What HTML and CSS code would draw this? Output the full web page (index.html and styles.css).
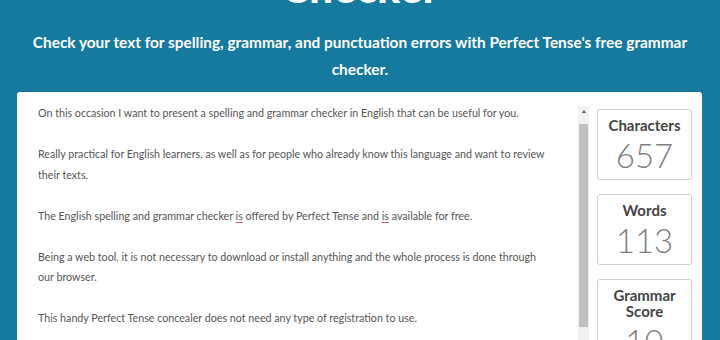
FILE: index.html
```html
<!DOCTYPE html>
<html>
<head>
<meta charset="utf-8">
<link rel="stylesheet" href="styles.css">
</head>
<body>
<header class="hero">
  <h1 class="title">Checker</h1>
  <p class="subtitle">Check your text for spelling, grammar, and punctuation errors with Perfect Tense's free grammar checker.</p>
</header>
<main class="card">
  <div class="editor">
    <div class="text">
      <p>On this occasion I want to present a spelling and grammar checker in English that can be useful for you.</p>
      <p>Really practical for English learners, as well as for people who already know this language and want to review their texts.</p>
      <p>The English spelling and grammar checker <span class="err">is</span> offered by Perfect Tense and <span class="err">is</span> available for free.</p>
      <p>Being a web tool, it is not necessary to download or install anything and the whole process is done through our browser.</p>
      <p>This handy Perfect Tense concealer does not need any type of registration to use.</p>
    </div>
    <div class="scrollbar">
      <div class="arrow"></div>
      <div class="thumb"></div>
    </div>
  </div>
  <aside class="stats">
    <div class="stat">
      <div class="stat-label">Characters</div>
      <div class="stat-value">657</div>
    </div>
    <div class="stat">
      <div class="stat-label">Words</div>
      <div class="stat-value">113</div>
    </div>
    <div class="stat">
      <div class="stat-label">Grammar<br>Score</div>
      <div class="stat-value">10</div>
    </div>
  </aside>
</main>
</body>
</html>
```
FILE: styles.css
```css
html, body {
  margin: 0;
  padding: 0;
}
body {
  background: #16799e;
  width: 720px;
  height: 340px;
  overflow: hidden;
  font-family: Lato, "Open Sans", sans-serif;
}
.hero {
  text-align: center;
  color: #fff;
}
.title {
  margin: -34px 0 0;
  font-size: 42px;
  line-height: 42px;
  font-weight: 900;
  letter-spacing: 0.5px;
}
.subtitle {
  margin: 21px 16px 0;
  font-size: 15.4px;
  line-height: 27px;
  font-weight: 700;
}
.card {
  margin: 9px 18px 0 17px;
  background: #fff;
  border-radius: 3px 3px 0 0;
  display: flex;
  padding: 11px 10px 0 21px;
  height: 300px;
}
.editor {
  flex: 1;
  display: flex;
}
.text {
  flex: 1;
  padding-right: 28px;
  font-size: 10.7px;
  line-height: 20.5px;
  color: #555;
}
.text p {
  margin: 0 0 20.5px;
}
.err {
  text-decoration: underline;
  text-decoration-color: #e2587a;
  text-underline-offset: 2px;
}
.scrollbar {
  width: 11px;
  margin-top: 3px;
  background: #f1f1f1;
  display: flex;
  flex-direction: column;
  align-items: center;
}
.arrow {
  width: 0;
  height: 0;
  margin-top: 4px;
  border-left: 2.5px solid transparent;
  border-right: 2.5px solid transparent;
  border-bottom: 3px solid #555;
}
.thumb {
  margin-top: 11px;
  width: 9px;
  height: 203px;
  background: #c1c1c1;
}
.stats {
  width: 95px;
  margin-left: 8px;
  margin-top: 6px;
  display: flex;
  flex-direction: column;
  gap: 14px;
}
.stat {
  border: 1px solid #cfcfcf;
  border-radius: 3px;
  text-align: center;
  padding-top: 7px;
  height: 62px;
  flex-shrink: 0;
}
.stat-label {
  font-size: 15px;
  line-height: 16px;
  font-weight: 700;
  color: #444;
}
.stat-value {
  font-size: 33px;
  line-height: 34px;
  font-weight: 300;
  color: #7f7f7f;
  margin-top: 5px;
}
```
